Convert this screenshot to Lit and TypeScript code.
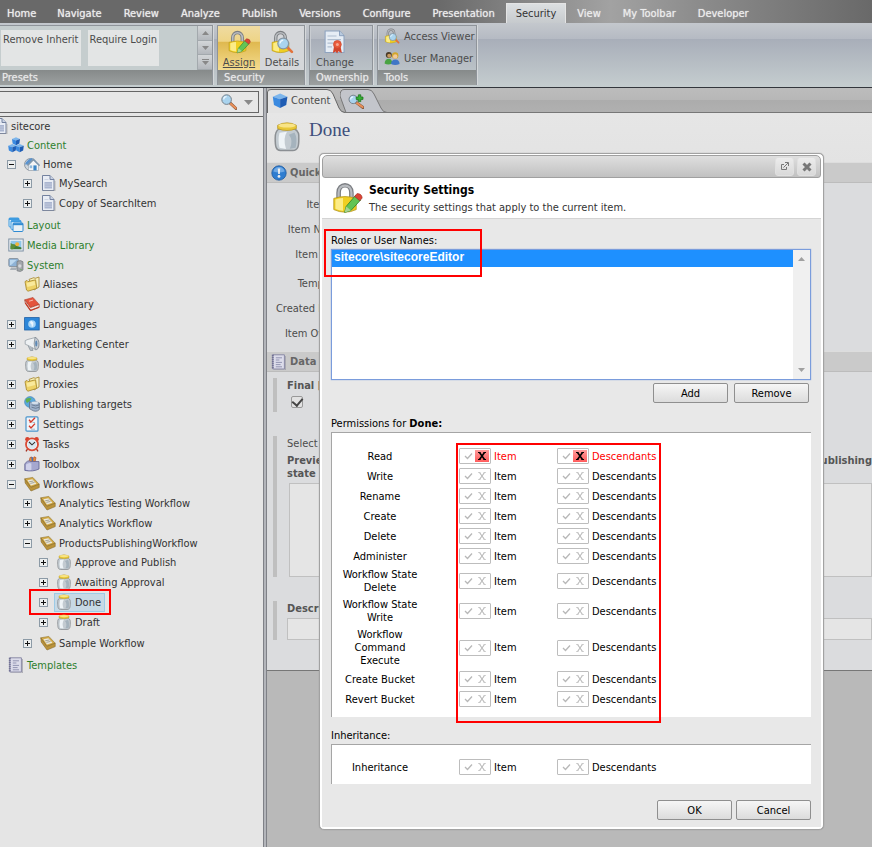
import { LitElement, html, svg, css, nothing } from "lit";
import type { TemplateResult } from "lit";
import { customElement, property } from "lit/decorators.js";
import { classMap } from "lit/directives/class-map.js";

const lens = (x: number, y: number, r: number) => svg`
  <path d="M${x + r * 0.7} ${y + r * 0.7} L15 14.5" stroke="#8a5a3a" stroke-width="3" stroke-linecap="round"/>
  <path d="M${x + r * 0.9} ${y + r * 0.9} L14.6 14" stroke="#e98f5a" stroke-width="2" stroke-linecap="round"/>
  <circle cx=${x} cy=${y} r=${r} fill="#a9d3ee" stroke="#77828c" stroke-width="1"/>
  <path d="M${x - r * 0.6} ${y} A${r * 0.6} ${r * 0.6} 0 0 1 ${x} ${y - r * 0.6}" stroke="#eef8ff" fill="none" stroke-width="1.2"/>`;

const padlock = svg`
  <path d="M3.8 8 V5.4 C3.8 .4 10.2 .4 10.2 5.4 V8" fill="none" stroke="#7b7e82" stroke-width="2.3"/>
  <path d="M3.8 8 V5.4 C3.8 .6 10.2 .6 10.2 5.4 V8" fill="none" stroke="#b9bcc0" stroke-width="1.1"/>
  <path d="M1.4 8.2 Q7 6.4 12.6 8.2 V13.8 Q7 16.4 1.4 13.8 Z" fill="#f0cf22" stroke="#b3941c" stroke-width=".4"/>
  <path d="M2.2 8.8 Q4 8 6 8 V14.4 Q3.5 14.2 2.2 13.4 Z" fill="#fcec86"/>`;

const jar = svg`
  <path d="M3.6 4 C1.6 5.4 1.6 7 1.7 9 C1.7 13 2 15.4 4.5 15.5 H11 C14 15.4 14.3 13 14.3 9 C14.4 7 14.4 5.4 12.2 4 Z" fill="#c3cbd1" stroke="#8b8f93" stroke-width=".8"/>
  <path d="M4 6 Q3 10 4 14 L7.5 14.6 Q5.6 9 8 5.4 Z" fill="#eef3f6"/>
  <path d="M9 7 Q11.5 10 9.5 14.5 L12.6 14 Q13.8 9 12 5.8 Z" fill="#a5b3bd"/>
  <path d="M3 2 Q8 -.6 13 2 V3.8 Q8 5.8 3 3.8 Z" fill="#e8c838" stroke="#b5962a" stroke-width=".4"/>
  <ellipse cx="8" cy="2.1" rx="4.6" ry="1.1" fill="#f8e487"/>`;

const cube = (x: number, y: number, s: number) => svg`
  <path d="M${x} ${y + s * 0.22} L${x + s / 2} ${y} L${x + s} ${y + s * 0.22} L${x + s / 2} ${y + s * 0.4} Z" fill="#7db6ec"/>
  <path d="M${x} ${y + s * 0.22} L${x + s / 2} ${y + s * 0.4} V${y + s} L${x + s * 0.08} ${y + s * 0.78} Z" fill="#3b8ae0"/>
  <path d="M${x + s} ${y + s * 0.22} L${x + s / 2} ${y + s * 0.4} V${y + s} L${x + s * 0.92} ${y + s * 0.78} Z" fill="#1f5db4"/>`;

const ICONS: Record<string, TemplateResult> = {
  doc: svg`<path d="M2.5 .5 H10 L14 4.5 V15.5 H2.5 Z" fill="#e9edf5" stroke="#7482a0"/>
    <path d="M10 .5 V4.5 H14" fill="#c9d2e4" stroke="#7482a0"/><rect x="4.5" y="7" width="7.5" height="6.5" fill="#aab5d0"/>
    <path d="M4.5 4.5 H8.5 M4.5 9 H12 M4.5 11.2 H12" stroke="#c6cee0" stroke-width=".8"/><path d="M3.5 16 H15 V6" stroke="#999" fill="none" stroke-width=".6"/>`,
  cubes: svg`${cube(4, 0.2, 8)}${cube(0.2, 7, 8.2)}${cube(7.6, 7, 8.2)}`,
  cube: svg`${cube(0.8, 0.5, 14.6)}`,
  home: svg`<circle cx="6.5" cy="8.5" r="6" fill="#cfd6dd" stroke="#8f99a3"/><path d="M.8 8.5 Q4 2 8.5 2 L7 8.5 Z" fill="#5a93cf"/>
    <path d="M4.5 9 L9.5 4 L14.5 9 V14.5 H4.5 Z" fill="#f3f4f5" stroke="#9aa3ab" stroke-width=".6"/>
    <path d="M3.4 9.4 L9.4 3.4 L15.6 9.6" fill="none" stroke="#7f97ad" stroke-width="1.5"/><rect x="9.4" y="9.4" width="3.2" height="5" fill="#3d86c6"/><rect x="5.6" y="9.4" width="2.6" height="2.8" fill="#8fb9dc"/>`,
  layout: svg`<rect x="1" y="1" width="10" height="9" rx="1" fill="#dff0fb" stroke="#3d9be0"/><path d="M1 2 H11" stroke="#3d9be0" stroke-width="2"/>
    <rect x="3" y="3.4" width="10" height="9" rx="1" fill="#e4f2fb" stroke="#3d9be0"/><path d="M3 4.4 H13" stroke="#3d9be0" stroke-width="1.6"/>
    <rect x="5" y="6" width="10" height="8.5" rx="1" fill="#e8f1f6" stroke="#2f8ad2"/><path d="M5 7.2 H15" stroke="#2f8ad2" stroke-width="2"/>`,
  media: svg`<rect x=".8" y="2" width="14.4" height="12" fill="#edf1f5" stroke="#7f92a5"/><rect x="2.6" y="3.8" width="10.8" height="8.4" fill="#8fc6ea"/>
    <path d="M2.6 9 Q6 5.6 9 9 L13.4 10.5 V12.2 H2.6 Z" fill="#3f7d35"/><path d="M2.6 6 L8 9 L5 12.2 H2.6 Z" fill="#5b8e3a"/><circle cx="9.2" cy="7.2" r="2" fill="#f0b53a"/>`,
  system: svg`<rect x=".8" y="1.5" width="9.5" height="8" rx="1" fill="#8fb3d6" stroke="#8c98a4"/><path d="M2 3 H8.5 L3 8 H2 Z" fill="#bcd8ef"/><path d="M3 10.5 H9 L8 13 H2 Z" fill="#a9b0b7"/>
    <path d="M9 4.5 Q12.5 2.5 15 4.8 V13 Q13 15.5 9 13.8 Z" fill="#a2a6ab" stroke="#74787c" stroke-width=".7"/><circle cx="11.8" cy="9" r="1.7" fill="#d5d8da"/><circle cx="13" cy="12.6" r=".7" fill="#57b04a"/>`,
  folder: svg`<path d="M5 3.4 L10 1.6 L11 2.4 L15 1 V11 L10 14 Z" fill="#f6eeb8" stroke="#a3842b" stroke-width=".8"/>
    <path d="M1 5.6 L3 4.4 L4 5.6 L11.6 3.8 L12.8 12.4 L4 15.2 L2.5 14 Z" fill="#eed266" stroke="#a3842b" stroke-width=".8"/><path d="M2.6 7 L10.6 5 L11.2 9 L3.4 11 Z" fill="#f9e99c"/>`,
  book: svg`<path d="M.8 3.8 L9 1.4 L15.2 8.4 L6.4 11.6 Z" fill="#e4543d" stroke="#a83522" stroke-width=".5"/><path d="M.8 3.8 L6.4 11.6 L15.2 8.4 V11 L6.6 14.4 L1.2 6.6 Z" fill="#efe2de" stroke="#b0432f" stroke-width=".8"/>
    <path d="M1.2 6.8 L6.5 14.6 L15.3 11.2" fill="none" stroke="#c23c26" stroke-width="1.2"/><path d="M5 5.2 L9 4" stroke="#f9b7a8" stroke-width="1.2"/>`,
  flag: svg`<rect x=".6" y="1.6" width="14.6" height="12.4" fill="#2c86d8" stroke="#1c5fa6" stroke-width=".8"/><circle cx="8" cy="8" r="3.8" fill="#a8d5f6"/><path d="M7 4.5 Q5 7 7.4 8.2 L8 11.5 Q10 9 9.4 6.5 Z" fill="#e8f5ff"/>`,
  horn: svg`<path d="M11 1.2 Q15.4 3 15 9 Q14.6 13.8 11.4 13.8 Q8.4 9 11 1.2 Z" fill="#c6ccd3" stroke="#7b848d" stroke-width=".8"/>
    <path d="M1.2 4.6 L4 3.4 L11 1.6 Q9 8 11.2 13.2 L3.6 9.2 L1.2 8.2 Z" fill="#eef1f3" stroke="#8d969e" stroke-width=".7"/><path d="M4 9.5 L6.4 14.6 L9 14.4 L8 11.6" fill="#b5bdc4" stroke="#7b848d" stroke-width=".6"/><ellipse cx="12.3" cy="7.5" rx="1.1" ry="3" fill="#5d88b4"/>`,
  jar,
  publish: svg`<circle cx="6" cy="6" r="5.4" fill="#5aa9dc" stroke="#3a7fb0" stroke-width=".6"/><path d="M2 3 Q5 1 7.5 2.6 Q6 6 3 7 Q1 5 2 3 Z" fill="#62b04b"/>
    <path d="M7.5 6.5 Q12 4.6 15.3 7 V13.6 Q12 16.8 7.500 13.8 L5.5 12.6 V5.6 Z" fill="#9fb2cb" stroke="#5f7188" stroke-width=".8"/><path d="M7.5 8.8 Q12 11 15.3 8.8 M7.5 11.2 Q12 13.4 15.3 11.2" stroke="#5f7188" fill="none" stroke-width=".8"/><ellipse cx="11" cy="6.8" rx="3.6" ry="1.3" fill="#d4dfeb"/>`,
  settings: svg`<rect x="2" y=".8" width="12" height="14.4" rx="1" fill="#f0f4f8" stroke="#4a94cc" stroke-width="1.2"/>
    <path d="M5 3.8 L7 6 L11 1.8 M5.6 6.4 L7 6 M5 9.8 L7 12 L11 7.6" fill="none" stroke="#d43a2a" stroke-width="1.3"/><path d="M8.5 6.5 H11 M7 13.2 H11" stroke="#aabcca"/>`,
  clock: svg`<circle cx="3.4" cy="3.2" r="2.2" fill="#d8402c"/><circle cx="12.6" cy="3.2" r="2.2" fill="#d8402c"/><path d="M3.5 13 L2 15.4 M12.5 13 L14 15.4" stroke="#a43120" stroke-width="1.4"/>
    <circle cx="8" cy="8.4" r="6" fill="#f2f7fa" stroke="#d94b36" stroke-width="1.8"/><circle cx="8" cy="8.4" r="4.4" fill="#d8e8f2"/><path d="M5 6 L8 8.8 L11 6.2" stroke="#333" fill="none" stroke-width="1.1"/>`,
  toolbox: svg`<path d="M5 6 L6 1.5 L8 1 L8.5 5 L10 .8 L12 1.6 L11 6 Z" fill="#e8913a" stroke="#b84f27" stroke-width=".7"/><path d="M8 1 L8.5 5" stroke="#3b72c0" stroke-width="1.4"/>
    <path d="M.8 8 Q3.500 3.6 7 5.4 L15 5.6 V13 Q9 16 .8 14.4 Z" fill="#a5a7cf" stroke="#5e6090" stroke-width=".8"/><path d="M2 8.6 Q5 6 7.4 7.4 V14 Q5 14.6 2 13.8 Z" fill="#cfd1ea"/>`,
  workflow: svg`<path d="M.8 2.8 L8.8 1.4 L15.2 8.2 L6.8 11.4 Z" fill="#d2aa48" stroke="#94762c" stroke-width=".6"/><path d="M3.4 4.2 L8.4 3.2 L12.4 7.8 L7 9.6 Z" fill="#ece8da"/><path d="M5.2 5.8 L9.4 5 M6.3 7.4 L10.6 6.4" stroke="#9d9d90" stroke-width=".9"/>
    <path d="M.8 2.8 L6.8 11.4 L15.2 8.2 V11.6 L7 15 L1.2 7 Z" fill="#bb933a" stroke="#86692a" stroke-width=".6"/>`,
  template: svg`<path d="M1.8 .8 H13.4 V15 H1.8 Z" fill="#dcdcea" stroke="#8a8aa6"/><path d="M1.8 .8 V15" stroke="#63638a" stroke-width="2" stroke-dasharray="1 1"/>
    <path d="M4.8 3.8 H11 M4.8 6 H8.4 M4.8 8.4 H11 M4.8 10.6 H9.6 M4.8 12.8 H11" stroke="#9395b3" stroke-width="1"/><path d="M14.4 2 V16 H3" fill="none" stroke="#9a9aa6" stroke-width=".8"/>`,
  lens: lens(5.6, 5.6, 4.8),
  lensPlus: svg`${lens(5.2, 6.4, 4.2)}<path d="M8.2 4 H10.4 V1.8 H12.8 V4 H15 V6.4 H12.8 V8.6 H10.4 V6.4 H8.2 Z" fill="#35b135" stroke="#166c16" stroke-width=".7"/>`,
  lockPen: svg`${padlock}<path d="M6.8 15.2 L7.6 12.2 L12.2 6.8 L14.8 9 L10 14.2 Z" fill="#62c455" stroke="#2c7d2c" stroke-width=".4"/>
    <path d="M11.800 7.2 L13 5.8 Q15.4 5.8 15.6 8 L14.4 9.4 Z" fill="#dc4536" stroke="#9a2b22" stroke-width=".3"/><path d="M6.8 15.2 L7.6 12.2 L10 14.2 Z" fill="#a7d493"/>`,
  lockLens: svg`${padlock}<path d="M11.500 11.5 L14.6 14.6" stroke="#e2733c" stroke-width="1.8" stroke-linecap="round"/><circle cx="8.8" cy="9" r="3.6" fill="#a9d4ef" stroke="#8595a2" stroke-width=".8"/><path d="M6.6 9 Q6.8 7 8.8 6.7" stroke="#eef8ff" fill="none" stroke-width=".8"/>`,
  certificate: svg`<path d="M1.4 .6 H11 L14 3.8 V15 H1.4 Z" fill="#e6edf5" stroke="#8ea3bf" stroke-width=".7"/><path d="M11 .6 V3.8 H14" fill="#b9cbe0" stroke="#7890b0" stroke-width=".5"/>
    <path d="M3 4 H9 M3 6.4 H12 M3 8.8 H7 M3 11.2 H6" stroke="#aebdd0" stroke-width=".8"/><path d="M7.400 10.6 L6.6 15.4 L8.4 14.4 L9.4 15.6 L10.2 14.2 L12.6 15.4 L11.6 10.6 Z" fill="#d2452c"/><circle cx="9.6" cy="9.6" r="2.6" fill="#ea5b3c" stroke="#c9482e" stroke-width=".5"/><circle cx="9.6" cy="9.6" r="1" fill="#f6a78f"/>`,
  users: svg`<circle cx="4.8" cy="5" r="3" fill="#4a3a26"/><circle cx="5.2" cy="5.8" r="2" fill="#c99a62"/><path d="M.6 13.6 Q.8 8.8 5 8.8 Q8 8.8 8.4 13.6 Q4 15.4 .6 13.6 Z" fill="#48a343"/>
    <circle cx="11.2" cy="5.4" r="3.2" fill="#d3a52a"/><circle cx="11.2" cy="6.4" r="2.2" fill="#f1c99a"/><path d="M7 14 Q7.2 9.4 11.4 9.4 Q15.4 9.4 15.6 14 Q11 16 7 14 Z" fill="#3f76c6"/>`,
  info: svg`<circle cx="8" cy="8" r="7.2" fill="#2f7dd0" stroke="#1f5b9e" stroke-width=".8"/><path d="M2.4 6.6 Q3.4 2 8 2 Q12.6 2 13.6 6.6 Q8 8.6 2.4 6.6 Z" fill="#6fa9e4"/><path d="M6.8 3.4 H9.2 L8.8 9 H7.2 Z" fill="#eee"/><circle cx="8" cy="11.4" r="1.4" fill="#eee"/>`,
};

const icon = (name: string, size: number) =>
  html`<svg width=${size} height=${size} viewBox="0 0 16 16" fill="none" aria-hidden="true">${ICONS[name]}</svg>`;

interface TreeNode {
  label: string;
  icon: string;
  toggle?: "+" | "-";
  green?: boolean;
  selected?: boolean;
  children?: TreeNode[];
}

const TREE: TreeNode[] = [
  {
    label: "sitecore", icon: "doc", children: [
      { label: "Content", icon: "cubes", green: true, children: [
        { label: "Home", icon: "home", toggle: "-", children: [
          { label: "MySearch", icon: "doc", toggle: "+" },
          { label: "Copy of SearchItem", icon: "doc", toggle: "+" },
        ] },
      ] },
      { label: "Layout", icon: "layout", green: true },
      { label: "Media Library", icon: "media", green: true },
      { label: "System", icon: "system", green: true, children: [
        { label: "Aliases", icon: "folder" },
        { label: "Dictionary", icon: "book" },
        { label: "Languages", icon: "flag", toggle: "+" },
        { label: "Marketing Center", icon: "horn", toggle: "+" },
        { label: "Modules", icon: "jar" },
        { label: "Proxies", icon: "folder", toggle: "+" },
        { label: "Publishing targets", icon: "publish", toggle: "+" },
        { label: "Settings", icon: "settings", toggle: "+" },
        { label: "Tasks", icon: "clock", toggle: "+" },
        { label: "Toolbox", icon: "toolbox", toggle: "+" },
        { label: "Workflows", icon: "workflow", toggle: "-", children: [
          { label: "Analytics Testing Workflow", icon: "workflow", toggle: "+" },
          { label: "Analytics Workflow", icon: "workflow", toggle: "+" },
          { label: "ProductsPublishingWorkflow", icon: "workflow", toggle: "-", children: [
            { label: "Approve and Publish", icon: "jar", toggle: "+" },
            { label: "Awaiting Approval", icon: "jar", toggle: "+" },
            { label: "Done", icon: "jar", toggle: "+", selected: true },
            { label: "Draft", icon: "jar", toggle: "+" },
          ] },
          { label: "Sample Workflow", icon: "workflow", toggle: "+" },
        ] },
      ] },
      { label: "Templates", icon: "template", green: true },
    ],
  },
];

const base = css`
  * { box-sizing: border-box; }
  :host { font: 11px/13px "DejaVu Sans Condensed", "Liberation Sans", sans-serif; }
  button, input, select { font: inherit; color: inherit; margin: 0; padding: 0; }
  a { color: inherit; text-decoration: none; }
  svg { display: block; flex: none; }
`;

@customElement("main-ribbon")
export class MainRibbon extends LitElement {
  static styles = [base, css`
    :host { display: block; color: #4c4c4c; border-bottom: 1px solid #33363c; }
    .tabs {
      display: flex; align-items: flex-end; height: 23px; white-space: nowrap; overflow: hidden;
      background: linear-gradient(90deg, #696969 50%, #a2a2a2 70%, #8c8c8c 80%, #696969 100%);
    }
    .tabs a { padding: 3px 10px; color: #ececec; border: 1px solid transparent; border-bottom: 0; text-shadow: 0 0 1px #ddd; flex: none; }
    .tabs a.start { padding: 3px 9px 3px 6px; }
    .tabs a.active { padding: 3px 9px 3px 9px; color: #333; text-shadow: none; background: linear-gradient(#dcdfe1, #c6cacd); border-color: #e4e4e4; }
    .bar {
      display: flex; gap: 3px; height: 64px; padding: 2px 0; overflow: hidden;
      background: linear-gradient(#c4c8cd, #b5bac3 16px, #a8aeb9 16px, #c5cdcf);
    }
    .group { display: flex; flex-direction: column; border: 1px solid #8f949a; border-width: 1px 1px 0; box-shadow: 1px 0 #d5d8da, inset 1px 0 #c9cdd2; margin-right: 1px; }
    .body { display: flex; height: 44px; }
    .caption { height: 15px; padding: 1px 6px; color: #e9e9e9; text-shadow: 0 0 1px #ccc; background: linear-gradient(#868a8a, #9ca0a0); }
    .first { width: 213px; border-left: 0; }
    .first .caption { padding-left: 2px; }
    .presets { background: #c5cdce; gap: 7px; padding: 4px 0 2px 1px; }
    .presets button { height: 36px; padding: 3px 2px; border: 0; background: #e3e5e5; display: flex; white-space: nowrap; }
    .spin { display: flex; flex-direction: column; margin: -4px 0 -2px auto; width: 15px; border-left: 1px solid #a3a9ad; }
    .spin button { flex: 1; height: auto; padding: 0; background: linear-gradient(#d3d6d8, #b4b8bd); border-bottom: 1px solid #a3a9ad; align-items: center; justify-content: center; }
    .big { display: flex; flex-direction: column; align-items: center; justify-content: flex-end; padding-bottom: 1px; gap: 2px; width: 42px; border: 0; background: none; white-space: nowrap; }
    .big.on { background: linear-gradient(#efdba2, #eed486 35%, #dfb84e 36%, #f4dc90); text-decoration: underline; }
    .light { background: #d5d7da; width: 88px; }
    .light .body { gap: 1px; }
    .own { width: 64px; }
    .own .body { padding-left: 2px; }
    .own .big { width: 46px; }
    .small { display: flex; align-items: center; gap: 4px; height: 22px; padding: 0 0 2px 6px; border: 0; background: none; white-space: nowrap; }
    .tools { width: 100px; }
    .tools .body { flex-direction: column; }
  `];

  render() {
    const tabs = ["Home", "Navigate", "Review", "Analyze", "Publish", "Versions", "Configure", "Presentation", "Security", "View", "My Toolbar", "Developer"];
    return html`
      <nav class="tabs">
        ${tabs.map((t, i) => html`<a href="#" class=${classMap({ start: i === 0, active: t === "Security" })}>${t}</a>`)}
      </nav>
      <div class="bar">
        <section class="group first">
          <div class="body presets">
            <button>Remove Inherit</button><button>Require Login</button>
            <div class="spin">
              <button aria-label="Up"><svg width="7" height="4"><path d="M0 4L3.5 0L7 4Z" fill="#888"/></svg></button>
              <button aria-label="Down"><svg width="7" height="4"><path d="M0 0L3.5 4L7 0Z" fill="#888"/></svg></button>
              <button aria-label="More"><svg width="7" height="6"><path d="M0 0H7V1H0ZM0 2L3.5 6L7 2Z" fill="#888"/></svg></button>
            </div>
          </div>
          <div class="caption">Presets</div>
        </section>
        <section class="group light">
          <div class="body">
            <button class="big on">${icon("lockPen", 24)}Assign</button>
            <button class="big">${icon("lockLens", 24)}Details</button>
          </div>
          <div class="caption">Security</div>
        </section>
        <section class="group own">
          <div class="body"><button class="big">${icon("certificate", 24)}Change</button></div>
          <div class="caption">Ownership</div>
        </section>
        <section class="group tools">
          <div class="body">
            <button class="small">${icon("lockLens", 16)}Access Viewer</button>
            <button class="small">${icon("users", 16)}User Manager</button>
          </div>
          <div class="caption">Tools</div>
        </section>
      </div>`;
  }
}

@customElement("content-tree")
export class ContentTree extends LitElement {
  static styles = [base, css`
    :host { display: flex; flex-direction: column; color: #333; background: #e5e5e5; overflow: hidden; }
    .search { display: flex; align-items: center; height: 22px; margin: 3px 4px 3px 0; padding-right: 5px; gap: 7px; border: 1px solid #666; border-left: 0; background: #e7e7e7; }
    .search input { flex: 1; min-width: 0; border: 0; background: none; outline: none; }
    .search button { display: flex; border: 0; background: none; }
    .tree { border-top: 1px solid #666; }
    ul { list-style: none; margin: -1px 0 0; padding: 0 0 1px 16px; }
    .tree > ul { margin: -1px 0 0 -32px; padding: 0; }
    .row { position: relative; display: flex; align-items: center; height: 20px; white-space: nowrap; }
    .slot { display: flex; flex: none; width: 22px; padding-left: 7px; }
    .slot button { display: flex; border: 1px solid #8c9aa6; background: #eceeee; }
    a { display: flex; align-items: center; gap: 3px; height: 19px; padding: 0 3px 0 1px; border: 1px solid transparent; }
    .green { color: #2d802d; }
    .selected { background: #c7d9e5; border-color: #9dcbe6; }
    .mark { position: absolute; left: -3px; top: -3px; width: 82px; height: 26px; border: 2px solid #f00; pointer-events: none; }
  `];

  private node(n: TreeNode): TemplateResult {
    return html`<li>
      <div class="row">
        <span class="slot">${n.toggle
          ? html`<button aria-label=${n.toggle === "+" ? "Expand" : "Collapse"}><svg width="7" height="7"><path d=${n.toggle === "+" ? "M1 3H6V4H1ZM3 1H4V6H3Z" : "M1 3H6V4H1Z"} fill="#111"/></svg></button>`
          : nothing}</span>
        <a href="#" class=${classMap({ green: !!n.green, selected: !!n.selected })}>${icon(n.icon, 16)}${n.label}</a>
        ${n.selected ? html`<span class="mark"></span>` : nothing}
      </div>
      ${n.children ? html`<ul>${n.children.map((c) => this.node(c))}</ul>` : nothing}
    </li>`;
  }

  render() {
    return html`
      <div class="search">
        <input type="text" aria-label="Search">
        <button aria-label="Search">${icon("lens", 16)}</button>
        <button aria-label="Options"><svg width="9" height="5"><path d="M0 0H9L4.5 5Z" fill="#8a8a8a"/></svg></button>
      </div>
      <div class="tree"><ul>${TREE.map((n) => this.node(n))}</ul></div>`;
  }
}

@customElement("item-editor")
export class ItemEditor extends LitElement {
  static styles = [base, css`
    :host { display: block; color: #4c4c4c; background: #b9b9b9; overflow: hidden; }
    .strip { display: flex; height: 25px; background: linear-gradient(#bcbcbc, #b7b7b7 12px, #acacac 12px, #b0b0b0); border-bottom: 1px solid #777; }
    .strip a { position: relative; display: flex; align-items: center; height: 25px; }
    .strip svg { position: relative; }
    .strip .shape { position: absolute; left: 0; top: 0; }
    .one { width: 73px; padding-left: 5px; gap: 3px; z-index: 1; }
    .one span { position: relative; }
    .two { width: 46px; padding-left: 8px; }
    .title { display: flex; gap: 7px; height: 49px; padding: 7px 5px; background: linear-gradient(#e6e6e6, #e3e3e3); }
    .title svg { width: 30px; height: 33px; }
    h1 { margin: 0; font: 19px/20px "Liberation Serif", serif; color: #3d4f7c; }
    h2 { display: flex; align-items: center; gap: 3px; height: 21px; margin: 0; padding: 0 4px; font-size: 11px; color: #666; background: #cacaca; border-bottom: 1px solid #bcbcbc; border-top: 1px solid #ddd; }
    .sheet { background: #dbdcde; border-bottom: 1px solid #777; padding-bottom: 30px; }
    .facts { width: 79px; border-collapse: collapse; margin: 9px 0 5px; }
    .facts td { height: 25px; padding: 0; text-align: right; white-space: nowrap; }
    .facts tr.gap td { height: 29px; padding-top: 4px; }
    .field { border-left: 4px solid #bfbfbf; margin: 6px 0 0 6px; padding: 1px 0 4px 10px; }
    .wide { margin-top: 24px; padding-bottom: 0; }
    b { display: block; color: #555; }
    .line { display: flex; justify-content: space-between; margin-top: 4px; }
    .targets { height: 94px; margin: 3px 0 4px 2px; border: 1px solid #c0c0c0; background: #e5e5e5; }
    .text { display: block; width: 100%; height: 22px; margin-top: 3px; border: 1px solid #c0c0c0; background: #e5e5e5; }
    .check { display: grid; place-items: center; appearance: none; width: 12px; height: 12px; margin: 4px 0 0 4px; border: 1px solid #999; border-radius: 2px; background: #e2e2e2; }
    .check:checked::after { content: ""; width: 5px; height: 8px; margin-top: -2px; border: solid #444; border-width: 0 2px 2px 0; transform: rotate(40deg); }
  `];

  render() {
    const facts = ["Item ID:", "Item Name:", "Item Path:", "Template:", "Created From:", "Item Owner:"];
    return html`
      <nav class="strip">
        <a class="one" href="#"><svg class="shape" width="78" height="25"><path d="M0 25V4Q0 1.500 4 1.500H60Q64 1.500 66 6L72 20Q74 24.500 78 24.500V25Z" fill="#e3e3e3"/><path d="M.5 25V4Q.5 1.500 4 1.500H60Q64 1.500 66 6L72 20Q74 24.500 78 24.500" fill="none" stroke="#666"/></svg>${icon("cube", 16)}<span>Content</span></a>
        <a class="two" href="#" aria-label="Search"><svg class="shape" width="48" height="25"><path d="M0 8Q0 1.500 4 1.500H28Q32 1.500 34 6L41 20Q43 24.500 47 24.500H6Z" fill="#c3c5cb" stroke="#777"/></svg>${icon("lensPlus", 16)}</a>
      </nav>
      <div class="sheet">
        <header class="title">${icon("jar", 32)}<h1>Done</h1></header>
        <h2>${icon("info", 16)}Quick Info</h2>
        <table class="facts">
          ${facts.map((f, i) => html`<tr class=${classMap({ gap: i === 3 })}><td>${f}</td></tr>`)}
        </table>
        <h2>${icon("template", 16)}Data</h2>
        <div class="field"><b><label for="final">Final [shared]:</label></b><input id="final" class="check" type="checkbox" checked></div>
        <div class="field wide">
          Select
          <b class="line"><span>Preview</span><span>publishing</span></b><b>state</b>
          <div class="targets"></div>
        </div>
        <div class="field wide"><b><label for="desc">Descript.</label></b><input id="desc" class="text" type="text"></div>
      </div>`;
  }
}

@customElement("security-dialog")
export class SecurityDialog extends LitElement {
  @property({ type: Array }) permissions = [
    "Read", "Write", "Rename", "Create", "Delete", "Administer", "Workflow State Delete",
    "Workflow State Write", "Workflow Command Execute", "Create Bucket", "Revert Bucket",
  ];

  static styles = [base, css`
    :host { display: block; color: #000; background: #fff; border: 1px solid #a2a2a2; border-radius: 5px; padding: 1px 2px 2px; box-shadow: 0 0 1px #888; }
    .bar { display: flex; justify-content: flex-end; align-items: center; gap: 3px; height: 23px; padding: 0 4px; border: 1px solid #a0a0a0; border-radius: 5px 5px 3px 3px; background: linear-gradient(#dfdfdf, #c1c1c1); }
    .bar button { display: grid; place-items: center; width: 19px; height: 19px; border: 1px solid #e0e0e0; border-radius: 3px; background: linear-gradient(#ececec, #d9d9d9); }
    header { display: flex; align-items: center; gap: 6px; height: 41px; padding-left: 9px; border-bottom: 1px solid #d4d4d4; }
    h1 { margin: 0 0 4px; font-size: 12px; line-height: 14px; }
    header p { margin: 0; color: #333; }
    .main { background: #e8e8e8; padding: 15px 10px 7px 9px; }
    .cap { display: block; height: 15px; }
    .roles { position: relative; }
    .list { display: flex; height: 131px; border: 1px solid #7a9cdc; box-shadow: 0 0 1px #7a9cdc; background: #fff; }
    select { flex: 1; min-width: 0; height: 129px; border: 0; outline: none; appearance: none; overflow: hidden; background: #fff; border-radius: 0; font: bold 12px/16px "Liberation Sans", sans-serif; }
    option { height: 17px; padding: 0 2px; font-weight: bold; color: #fff; -webkit-text-fill-color: #fff; background: linear-gradient(#1e90ff, #1e90ff); }
    .scroll { display: flex; flex-direction: column; justify-content: space-between; align-items: center; width: 17px; padding: 7px 0; background: #f0f0f0; }
    .actions { display: flex; justify-content: flex-end; gap: 6px; margin: 3px 2px 0 0; }
    .actions.end { margin: 16px 0 0; gap: 4px; }
    .push { width: 75px; height: 20px; border: 1px solid #8f8f8f; border-radius: 2px; background: linear-gradient(#f6f6f6, #dcdcdc); }
    .perm { margin-top: 14px; }
    .inh { margin-top: 12px; }
    .box { position: relative; background: #fff; border: 1px solid #a5a5a5; border-width: 1px 0 0 1px; padding: 13px 0 8px; }
    .inh .box { padding: 12px 0 7px; }
    table { border-collapse: collapse; }
    th { width: 96px; padding: 2px 8px; font-weight: normal; text-align: center; }
    td { padding: 2px 0 2px 31px; }
    td + td { padding-left: 40px; }
    .pair { display: flex; align-items: center; gap: 3px; height: 16px; width: 58px; }
    .deny .pair { color: #f00; }
    .ticks { display: flex; flex: none; align-items: center; width: 32px; height: 16px; padding: 0 1px; border: 1px solid #bdbdbd; border-radius: 1px; }
    .ticks label { position: relative; display: grid; place-items: center; width: 14px; height: 12px; color: #b8b8b8; }
    .ticks input { position: absolute; inset: 0; opacity: 0; }
    .deny .no { color: #000; background: linear-gradient(#ff9c9c, #ff5c5c); }
    .mark { position: absolute; border: 2px solid #f00; pointer-events: none; }
    .m1 { left: -7px; top: -5px; width: 158px; height: 48px; }
    .m2 { left: 124px; top: 10px; width: 205px; height: 280px; }
  `];

  private pair(row: string, what: string, deny: boolean) {
    return html`<div class="pair"><span class="ticks">
      <label><input type="checkbox" aria-label="Allow ${row} ${what}"><svg width="9" height="8"><path d="M1 4L3.500 6.500L8 1.500" fill="none" stroke="currentColor" stroke-width="1.3"/></svg></label>
      <label class="no"><input type="checkbox" aria-label="Deny ${row} ${what}" ?checked=${deny}><svg width="8" height="8"><path d="M1.500 .5L6.500 7.500M6.500 .5L1.500 7.500" stroke="currentColor" stroke-width=${deny ? 1.6 : 1.1}/><path d="M0 .5H2.500M5.500 .5H8M0 7.500H2.500M5.500 7.500H8" stroke="currentColor" stroke-width=${deny ? 1 : 0.6}/></svg></label>
    </span>${what}</div>`;
  }

  private row(name: string) {
    const deny = name === "Read";
    return html`<tr class=${classMap({ deny })}><th scope="row">${name}</th><td>${this.pair(name, "Item", deny)}</td><td>${this.pair(name, "Descendants", deny)}</td></tr>`;
  }

  render() {
    return html`
      <div class="bar">
        <button aria-label="Maximize"><svg width="9" height="9"><path d="M4 2.500H1.500V7.500H6.500V5" fill="none" stroke="#777"/><path d="M3.500 5.500L8 1M5 .5H8.500V4" fill="none" stroke="#777"/></svg></button>
        <button aria-label="Close"><svg width="10" height="10"><path d="M1.500 1.500L8.500 8.500M8.500 1.500L1.500 8.500" stroke="#777" stroke-width="3"/></svg></button>
      </div>
      <header>${icon("lockPen", 32)}<div><h1>Security Settings</h1><p>The security settings that apply to the current item.</p></div></header>
      <div class="main">
        <div class="roles">
          <label class="cap" for="roles">Roles or User Names:</label>
          <div class="list">
            <select id="roles" size="7"><option selected>sitecore\\sitecoreEditor</option></select>
            <div class="scroll"><svg width="7" height="4"><path d="M0 4L3.500 0L7 4Z" fill="#a0a0a0"/></svg><svg width="7" height="4"><path d="M0 0L3.500 4L7 0Z" fill="#a0a0a0"/></svg></div>
          </div>
          <span class="mark m1"></span>
        </div>
        <div class="actions"><button class="push">Add</button><button class="push">Remove</button></div>
        <div class="perm">
          <span class="cap">Permissions for <b>Done:</b></span>
          <div class="box"><table>${this.permissions.map((p) => this.row(p))}</table><span class="mark m2"></span></div>
        </div>
        <div class="inh">
          <span class="cap">Inheritance:</span>
          <div class="box"><table>${this.row("Inheritance")}</table></div>
        </div>
        <div class="actions end"><button class="push">OK</button><button class="push">Cancel</button></div>
      </div>`;
  }
}

@customElement("app-root")
export class AppRoot extends LitElement {
  static styles = [base, css`
    :host { position: relative; display: flex; flex-direction: column; min-height: 100vh; overflow: hidden; background: #b9b9b9; }
    .work { flex: 1; display: grid; grid-template-columns: 263px 4px minmax(0, 1fr); }
    .split { background: #b3b5ba; border: 1px solid #7f8187; border-width: 0 1px; }
    security-dialog { position: absolute; left: 319px; right: 48px; top: 153px; }
  `];

  render() {
    return html`
      <main-ribbon></main-ribbon>
      <div class="work">
        <content-tree></content-tree>
        <div class="split"></div>
        <item-editor></item-editor>
      </div>
      <security-dialog role="dialog" aria-label="Security Settings"></security-dialog>`;
  }
}
